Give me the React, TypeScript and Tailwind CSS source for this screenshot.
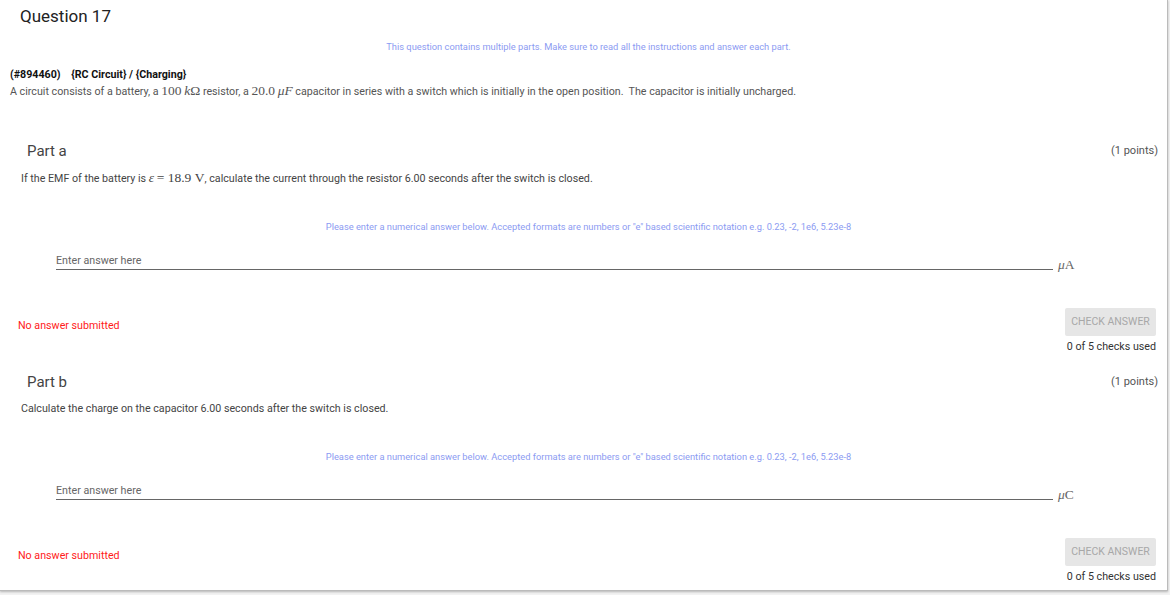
import React from 'react';

const M: React.FC<{ children: React.ReactNode; i?: boolean }> = ({ children, i }) => (
  <span className={`font-['Liberation_Serif',serif] text-[13.5px] ${i ? 'italic' : ''}`}>{children}</span>
);

const Part: React.FC<{ name: string; question: React.ReactNode; unit: React.ReactNode }> = ({ name, question, unit }) => (
  <div>
    <div className="flex items-center justify-between h-[20px]">
      <span className="pl-[27px] text-[15px] leading-[20px] text-[#444]">{name}</span>
      <span className="pr-[9px] text-[11px] text-[#555]">(1 points)</span>
    </div>
    <div className="mt-[9px] pl-[21px] text-[10.7px] leading-[16px] text-[#444]">{question}</div>
    <div className="mt-[33px] text-center pl-[10px] text-[9.3px] leading-[14px] text-[#8c9bf2]">
      Please enter a numerical answer below. Accepted formats are numbers or "e" based scientific notation e.g. 0.23, -2, 1e6, 5.23e-8
    </div>
    <div className="mt-[20px] flex items-end h-[16px]">
      <div className="ml-[56px] w-[997px] border-b border-[#666] h-[16px] text-[10.7px] leading-[14px] text-[#666]">
        Enter answer here
      </div>
      <div className="ml-[5px] leading-[14px] -mb-[2px] text-[#666]">{unit}</div>
    </div>
    <div className="mt-[38px] flex justify-between items-start pr-[11px]">
      <div className="mt-[11px] pl-[18px] text-[10.7px] leading-[14px] text-[#ff1a1a]">No answer submitted</div>
      <div className="flex flex-col items-end">
        <button className="w-[91px] h-[28px] bg-[#e6e6e6] rounded-[2px] text-[10.5px] text-[#a8a8a8] uppercase">
          Check answer
        </button>
        <div className="mt-[4px] text-[10.7px] leading-[14px] text-[#333]">0 of 5 checks used</div>
      </div>
    </div>
  </div>
);

export default function App() {
  return (
    <div className="w-[1170px] h-[595px] bg-[#f2f2f2] font-['Roboto',sans-serif] overflow-hidden">
      <div className="w-[1168px] h-[591px] bg-white border-r border-b border-[#bbb] shadow-[0_1px_2px_rgba(0,0,0,0.25)]">
        <div className="h-[34px] flex items-center pl-[20px] text-[17px] text-[#222]">Question 17</div>
        <div className="mt-[6px] text-center pl-[10px] text-[9.3px] leading-[14px] text-[#8c9bf2]">
          This question contains multiple parts. Make sure to read all the instructions and answer each part.
        </div>
        <div className="mt-[13px] pl-[10px] text-[10.7px] leading-[16px] font-bold text-[#111]">
          (#894460)&nbsp;&nbsp;&nbsp; {'{RC Circuit}'} / {'{Charging}'}
        </div>
        <div className="pl-[10px] text-[10.7px] leading-[16px] text-[#555]">
          A circuit consists of a battery, a <M>100</M> <M i>k</M><M>Ω</M> resistor, a <M>20.0</M> <M i>μF</M> capacitor in
          series with a switch which is initially in the open position.&nbsp; The capacitor is initially uncharged.
        </div>
        <div className="mt-[41px]">
          <Part
            name="Part a"
            question={
              <>
                If the EMF of the battery is <M i>ε</M> <M>=&nbsp;18.9 V</M>, calculate the current through the resistor 6.00
                seconds after the switch is closed.
              </>
            }
            unit={
              <>
                <M i>μ</M>
                <M>A</M>
              </>
            }
          />
        </div>
        <div className="mt-[18px]">
          <Part
            name="Part b"
            question={<>Calculate the charge on the capacitor 6.00 seconds after the switch is closed.</>}
            unit={
              <>
                <M i>μ</M>
                <M>C</M>
              </>
            }
          />
        </div>
      </div>
    </div>
  );
}
